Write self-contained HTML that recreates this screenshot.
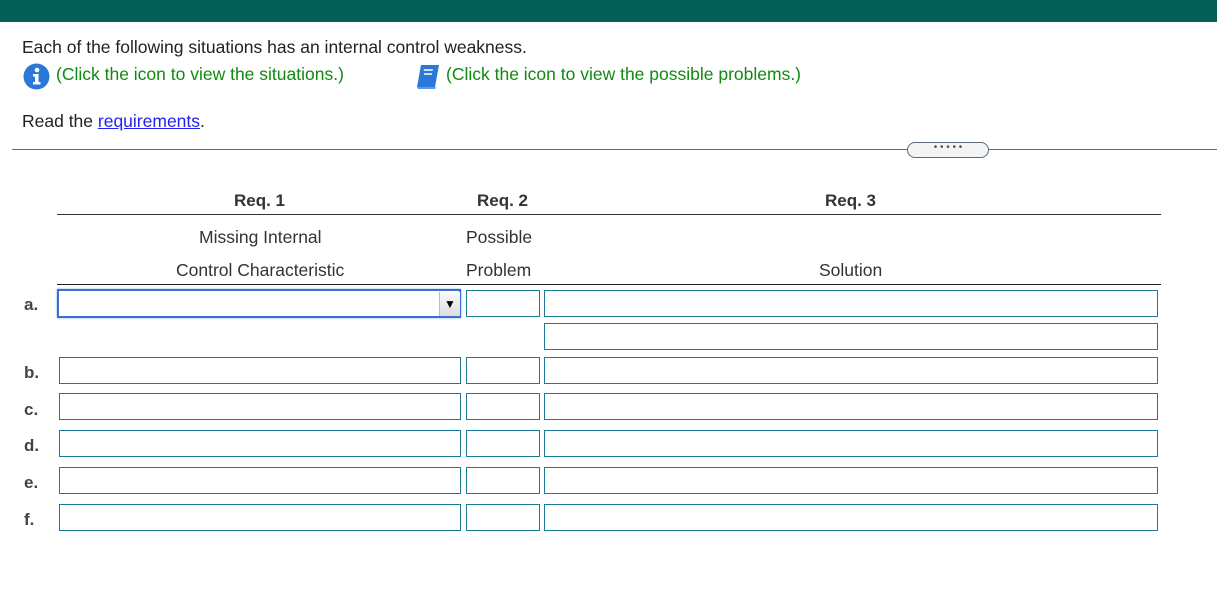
<!DOCTYPE html>
<html><head><style>
body{margin:0;width:1217px;height:606px;background:#fff;font-family:"Liberation Sans",Arial,sans-serif;position:relative;overflow:hidden;color:#222}
.a{position:absolute;white-space:nowrap}
.bar{position:absolute;left:0;top:0;width:1217px;height:22px;background:#045f57}
.g{color:#108a10;font-size:17.5px}
.box{position:absolute;border:1px solid #1a7a98;box-sizing:border-box;background:#fff}
.h{font-size:17.5px;color:#333}
.lbl{font-size:17px;color:#444;font-weight:bold}
</style></head><body>
<div class="bar"></div>
<div class="a" style="left:22px;top:37px;font-size:17.5px">Each of the following situations has an internal control weakness.</div>
<svg class="a" style="left:23px;top:63px" width="27" height="27" viewBox="0 0 27 27"><circle cx="13.5" cy="13.5" r="13" fill="#2b78d8"/><circle cx="14" cy="7" r="2.3" fill="#fff"/><path d="M10 11h5.5v8h2v2.5h-7.5v-2.5h2v-5.5h-2z" fill="#fff"/></svg>
<div class="a g" style="left:56px;top:64px">(Click the icon to view the situations.)</div>
<svg class="a" style="left:413px;top:63px" width="28" height="28" viewBox="0 0 28 28"><path d="M8 2h18l-4 22H4z" fill="#2b78d8"/><path d="M4 24l1 2h17l1-2z" fill="#5a9ae8"/><rect x="12" y="6" width="9" height="2" fill="#cfe2fb" transform="skewX(-10)"/><rect x="13" y="10" width="8" height="2" fill="#cfe2fb" transform="skewX(-10)"/></svg>
<div class="a g" style="left:446px;top:64px">(Click the icon to view the possible problems.)</div>
<div class="a" style="left:22px;top:111px;font-size:17.5px">Read the <span style="color:#2222ee;text-decoration:underline">requirements</span>.</div>
<div class="a" style="left:12px;top:149px;width:1205px;height:1px;background:#5c6a7a"></div>
<div class="a" style="left:907px;top:142px;width:80px;height:14px;border:1px solid #5c6a7a;border-radius:8px;background:#f3f4f6;text-align:center;font-size:10px;line-height:10px;color:#555">• • • • •</div>
<div class="a lbl" style="left:234px;top:191px;color:#333">Req. 1</div>
<div class="a lbl" style="left:477px;top:191px;color:#333">Req. 2</div>
<div class="a lbl" style="left:825px;top:191px;color:#333">Req. 3</div>
<div class="a" style="left:57px;top:214px;width:1104px;height:1px;background:#333"></div>
<div class="a h" style="left:199px;top:227px">Missing Internal</div>
<div class="a h" style="left:466px;top:227px">Possible</div>
<div class="a h" style="left:176px;top:260px">Control Characteristic</div>
<div class="a h" style="left:466px;top:260px">Problem</div>
<div class="a h" style="left:819px;top:260px">Solution</div>
<div class="a" style="left:57px;top:284px;width:1104px;height:1px;background:#222"></div>

<div class="a lbl" style="left:24px;top:295px">a.</div>
<div class="box" style="left:57px;top:289px;width:404px;height:29px;border:2px solid #3a6fd8;box-shadow:0 0 2px #7aa0e8"></div>
<div class="a" style="left:439px;top:292px;width:20px;height:24px;background:linear-gradient(#fafafa,#ddd);border-left:1px solid #bbb;font-size:12px;text-align:center;line-height:24px;color:#000">▼</div>
<div class="box" style="left:466px;top:290px;width:74px;height:27px"></div>
<div class="box" style="left:544px;top:290px;width:614px;height:27px"></div>
<div class="box" style="left:544px;top:323px;width:614px;height:27px"></div>

<div class="a lbl" style="left:24px;top:363px">b.</div>
<div class="box" style="left:59px;top:357px;width:402px;height:27px"></div>
<div class="box" style="left:466px;top:357px;width:74px;height:27px"></div>
<div class="box" style="left:544px;top:357px;width:614px;height:27px"></div>

<div class="a lbl" style="left:24px;top:400px">c.</div>
<div class="box" style="left:59px;top:393px;width:402px;height:27px"></div>
<div class="box" style="left:466px;top:393px;width:74px;height:27px"></div>
<div class="box" style="left:544px;top:393px;width:614px;height:27px"></div>

<div class="a lbl" style="left:24px;top:436px">d.</div>
<div class="box" style="left:59px;top:430px;width:402px;height:27px"></div>
<div class="box" style="left:466px;top:430px;width:74px;height:27px"></div>
<div class="box" style="left:544px;top:430px;width:614px;height:27px"></div>

<div class="a lbl" style="left:24px;top:473px">e.</div>
<div class="box" style="left:59px;top:467px;width:402px;height:27px"></div>
<div class="box" style="left:466px;top:467px;width:74px;height:27px"></div>
<div class="box" style="left:544px;top:467px;width:614px;height:27px"></div>

<div class="a lbl" style="left:24px;top:510px">f.</div>
<div class="box" style="left:59px;top:504px;width:402px;height:27px"></div>
<div class="box" style="left:466px;top:504px;width:74px;height:27px"></div>
<div class="box" style="left:544px;top:504px;width:614px;height:27px"></div>
</body></html>
